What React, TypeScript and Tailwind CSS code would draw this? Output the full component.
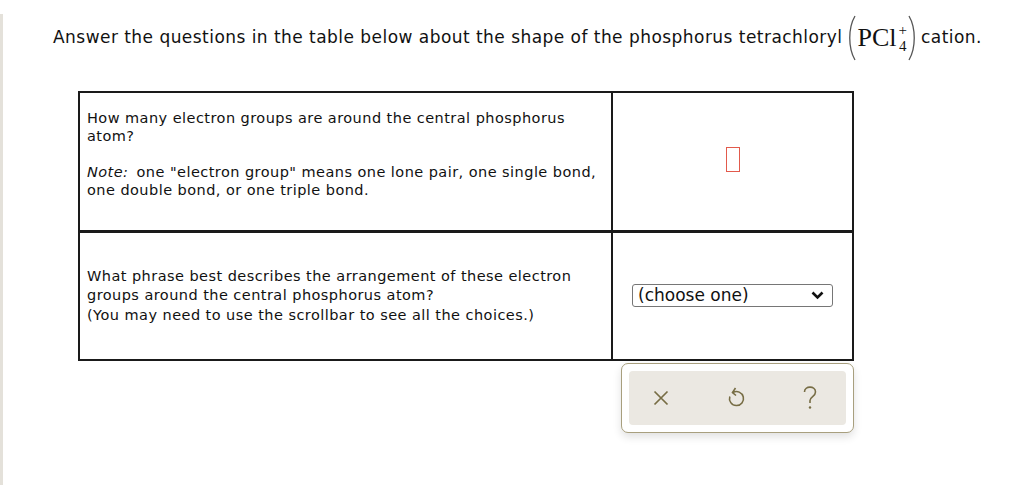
import React from "react";

const verdana = { fontFamily: '"DejaVu Sans", Verdana, sans-serif' };

function Paren({ flip }: { flip?: boolean }) {
  return (
    <svg width="10" height="48" viewBox="0 0 10 48" className="shrink-0">
      <path
        d={flip ? "M2 2 C 9 14, 9 34, 2 46" : "M8 2 C 1 14, 1 34, 8 46"}
        fill="none"
        stroke="#555"
        strokeWidth="1.3"
      />
    </svg>
  );
}

export default function App() {
  return (
    <div className="min-h-[485px] w-[1024px] bg-white text-[#111] border-l-[3px] border-[#e4e1da]" style={verdana}>
      <div className="flex items-center h-[48px] mt-[14px] pl-[50px] text-[17px] tracking-[0.46px]">
        <span>Answer the questions in the table below about the shape of the phosphorus tetrachloryl</span>
        <span className="flex items-center ml-[4px] tracking-normal">
          <Paren />
          <span className="flex items-center ml-[1px]" style={{ fontFamily: '"Liberation Serif", serif' }}>
            <span className="text-[26px] leading-none">PCl</span>
            <span className="flex flex-col items-center ml-[2px] text-[15px] leading-[16px]">
              <span>+</span>
              <span>4</span>
            </span>
          </span>
          <Paren flip />
        </span>
        <span className="ml-[4px]">cation.</span>
      </div>

      <div className="ml-[75px] mt-[29px] w-[776px] border-2 border-[#1a1a1a] text-[14.5px] tracking-[0.45px] leading-[18px]">
        <div className="flex h-[140px] border-b-[3px] border-[#1a1a1a]">
          <div className="w-[533px] border-r-2 border-[#1a1a1a] px-[7px] pt-[16px]">
            <p>How many electron groups are around the central phosphorus atom?</p>
            <p className="mt-[18px]">
              <i className="inline-block pr-[3px]">Note:</i> one "electron group" means one lone pair, one single bond, one double bond, or one triple bond.
            </p>
          </div>
          <div className="flex-1 flex items-center justify-center">
            <div className="w-[14px] h-[25px] border border-[#e25a4c] mb-[5px]" />
          </div>
        </div>
        <div className="flex h-[126px]">
          <div className="w-[533px] border-r-2 border-[#1a1a1a] px-[7px] flex flex-col justify-center leading-[19.5px]">
            <p>What phrase best describes the arrangement of these electron groups around the central phosphorus atom?</p>
            <p>(You may need to use the scrollbar to see all the choices.)</p>
          </div>
          <div className="flex-1 flex items-center justify-center tracking-normal">
            <div className="w-[201px] h-[23px] border border-[#767676] rounded-[3px] flex items-center justify-between pl-[5px] pr-[8px] text-[17px] mb-[2px]">
              <span>(choose one)</span>
              <svg width="13" height="9" viewBox="0 0 13 9">
                <path d="M1.5 1.5 L6.5 6.5 L11.5 1.5" fill="none" stroke="#111" strokeWidth="2.6" />
              </svg>
            </div>
          </div>
        </div>
      </div>

      <div className="ml-[618px] mt-[2px] w-[233px] h-[70px] rounded-[7px] border border-[#a89f7e] bg-white shadow-[0_4px_8px_rgba(0,0,0,0.12)] p-[7px]">
        <div className="h-full rounded-[4px] bg-[#ebe8e2] flex items-center justify-between pl-[21px] pr-[26px]">
          <svg width="22" height="22" viewBox="0 0 22 22">
            <path d="M4.5 4.5 L17.5 17.5 M17.5 4.5 L4.5 17.5" stroke="#776d45" strokeWidth="1.7" fill="none" />
          </svg>
          <svg width="22" height="24" viewBox="0 0 22 24">
            <path d="M8 6.5 A 7 7 0 1 1 4.8 10.5" stroke="#776d45" strokeWidth="1.6" fill="none" />
            <path d="M10.5 2 L7.5 6.5 L11 9.5" stroke="#776d45" strokeWidth="1.6" fill="none" />
          </svg>
          <svg width="20" height="26" viewBox="0 0 20 26">
            <path d="M4.5 7 C 4.5 0.5, 15.5 0.5, 15.5 7 C 15.5 11.5, 10 11.5, 10 15.5 L10 18" stroke="#776d45" strokeWidth="1.6" fill="none" />
            <circle cx="10" cy="22.5" r="1.2" fill="#776d45" />
          </svg>
        </div>
      </div>
    </div>
  );
}
